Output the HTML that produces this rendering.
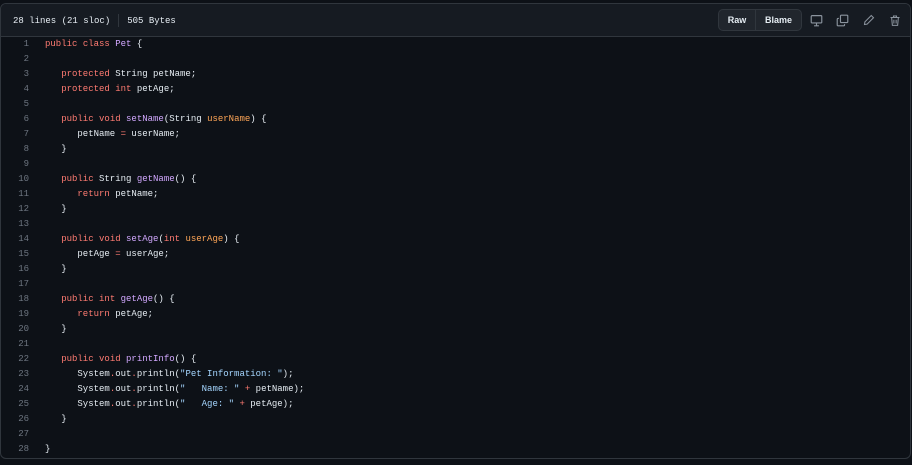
<!DOCTYPE html>
<html><head><meta charset="utf-8"><style>
body{margin:0;background:#0d1117;width:912px;height:465px;overflow:hidden;font-family:"Liberation Sans",sans-serif}
.box{position:absolute;left:0;top:3px;width:909px;height:454px;border:1px solid #30363d;border-radius:6px;overflow:hidden;background:#0d1117}
.hdr{height:32px;background:#161b22;border-bottom:1px solid #30363d;position:relative}
.meta{position:absolute;left:12px;top:10px;font:9px/12px "Liberation Mono",monospace;color:#e6edf3;white-space:nowrap}
.sep{display:inline-block;width:1px;height:13px;background:#30363d;vertical-align:middle;margin:0 8px}
.btns{position:absolute;left:717px;top:5px;height:20px;border:1px solid #30363d;border-radius:5px;background:#21262d;display:flex;font-size:9px;font-weight:bold;color:#e6edf3}
.btns div{line-height:20px;text-align:center}
.btns div+div{border-left:1px solid #30363d}
.ic{position:absolute;top:10px}
.code{position:absolute;top:37px;left:0;font:9px/15px "Liberation Mono",monospace;color:#e6edf3}
.ln{position:absolute;left:0;top:0;width:29px;text-align:right;color:#6e7681;white-space:pre}
.tx{position:absolute;left:45px;top:0;white-space:pre}
.k{color:#ff7b72}.e{color:#d2a8ff}.v{color:#ffa657}.s{color:#a5d6ff}
</style></head><body>
<div class="box">
<div class="hdr">
<div class="meta">28 lines (21 sloc)<span class="sep"></span>505 Bytes</div>
<div class="btns"><div style="width:36px">Raw</div><div style="width:45px">Blame</div></div>
<svg class="ic" style="left:809px" width="13" height="13" viewBox="0 0 16 16" fill="none" stroke="#8b949e" stroke-width="1.4"><rect x="1.5" y="2" width="13" height="9" rx="1"/><path d="M8 11v3M5 14.5h6"/></svg>
<svg class="ic" style="left:835px" width="13" height="13" viewBox="0 0 16 16" fill="none" stroke="#8b949e" stroke-width="1.4"><rect x="5.5" y="1.5" width="9" height="9" rx="1"/><path d="M3.5 5.5h-1a1 1 0 0 0-1 1v7a1 1 0 0 0 1 1h7a1 1 0 0 0 1-1v-1"/></svg>
<svg class="ic" style="left:862px" width="12" height="12" viewBox="0 0 16 16" fill="none" stroke="#8b949e" stroke-width="1.4"><path d="M11 2l3 3-8.5 8.5L2 14l.5-3.5z"/></svg>
<svg class="ic" style="left:888px" width="12" height="13" viewBox="0 0 16 16" fill="none" stroke="#8b949e" stroke-width="1.4"><path d="M2 4h12M6 4V2h4v2M3.5 4l1 10.5h7l1-10.5M6.5 7v5M9.5 7v5"/></svg>
</div>
</div>
<div class="code"><div class="ln">1
2
3
4
5
6
7
8
9
10
11
12
13
14
15
16
17
18
19
20
21
22
23
24
25
26
27
28</div><div class="tx"><span class="k">public</span> <span class="k">class</span> <span class="e">Pet</span> {

   <span class="k">protected</span> String petName;
   <span class="k">protected</span> <span class="k">int</span> petAge;

   <span class="k">public</span> <span class="k">void</span> <span class="e">setName</span>(String <span class="v">userName</span>) {
      petName <span class="k">=</span> userName;
   }

   <span class="k">public</span> String <span class="e">getName</span>() {
      <span class="k">return</span> petName;
   }

   <span class="k">public</span> <span class="k">void</span> <span class="e">setAge</span>(<span class="k">int</span> <span class="v">userAge</span>) {
      petAge <span class="k">=</span> userAge;
   }

   <span class="k">public</span> <span class="k">int</span> <span class="e">getAge</span>() {
      <span class="k">return</span> petAge;
   }

   <span class="k">public</span> <span class="k">void</span> <span class="e">printInfo</span>() {
      System<span class="k">.</span>out<span class="k">.</span>println(<span class="s">"Pet Information: "</span>);
      System<span class="k">.</span>out<span class="k">.</span>println(<span class="s">"   Name: "</span> <span class="k">+</span> petName);
      System<span class="k">.</span>out<span class="k">.</span>println(<span class="s">"   Age: "</span> <span class="k">+</span> petAge);
   }

}</div></div>
</body></html>
